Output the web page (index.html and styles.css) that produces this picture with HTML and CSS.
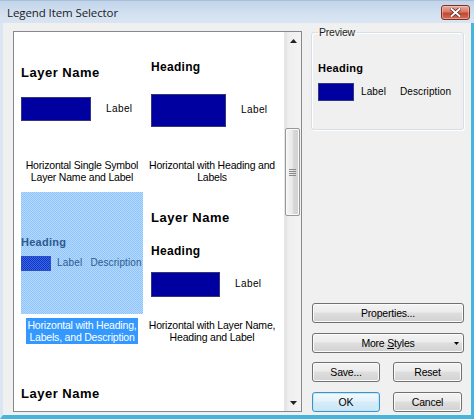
FILE: index.html
```html
<!DOCTYPE html>
<html>
<head>
<meta charset="utf-8">
<link rel="stylesheet" href="styles.css">
</head>
<body>
<div class="window">
  <div class="titlebar">
    <span class="title">Legend Item Selector</span>
    <div class="close">
      <svg width="11" height="9" viewBox="0 0 11 9"><path d="M1.5 1 L9.5 8 M9.5 1 L1.5 8" stroke="#5a1e18" stroke-width="3.4" stroke-linecap="square"/><path d="M1.5 1 L9.5 8 M9.5 1 L1.5 8" stroke="#fff" stroke-width="2" stroke-linecap="square"/></svg>
    </div>
  </div>
  <div class="client">
    <div class="listbox">
      <div class="list-content">
        <div class="grid">
          <div class="cell">
            <div class="thumb">
              <div class="ln">Layer Name</div>
              <div class="row r1"><div class="patch p1"></div><span class="lbl l1">Label</span></div>
            </div>
            <div class="caption"><span>Horizontal Single Symbol<br>Layer Name and Label</span></div>
          </div>
          <div class="cell">
            <div class="thumb">
              <div class="hd">Heading</div>
              <div class="row r2"><div class="patch p2"></div><span class="lbl l1">Label</span></div>
            </div>
            <div class="caption"><span>Horizontal with Heading and<br>Labels</span></div>
          </div>
          <div class="cell selected">
            <div class="thumb">
              <div class="hd small">Heading</div>
              <div class="row r3"><div class="patch p3"></div><span class="lbl l3">Label</span><span class="lbl l3d">Description</span></div>
            </div>
            <div class="caption"><span>Horizontal with Heading,<br>Labels, and Description</span></div>
          </div>
          <div class="cell">
            <div class="thumb">
              <div class="ln">Layer Name</div>
              <div class="hd h4">Heading</div>
              <div class="row r4"><div class="patch p4"></div><span class="lbl l4">Label</span></div>
            </div>
            <div class="caption"><span>Horizontal with Layer Name,<br>Heading and Label</span></div>
          </div>
          <div class="cell">
            <div class="thumb top">
              <div class="ln">Layer Name</div>
            </div>
          </div>
        </div>
      </div>
      <div class="vscroll">
        <div class="sb-btn">
          <svg width="7" height="4" viewBox="0 0 7 4"><path d="M0 4 L3.5 0 L7 4 Z" fill="#222"/></svg>
        </div>
        <div class="sb-track">
          <div class="sb-thumb">
            <svg width="7" height="7" viewBox="0 0 7 7"><path d="M0 0.5 H7 M0 2.5 H7 M0 4.5 H7 M0 6.5 H7" stroke="#8a8a8a" stroke-width="1"/></svg>
          </div>
        </div>
        <div class="sb-btn">
          <svg width="7" height="4" viewBox="0 0 7 4"><path d="M0 0 L3.5 4 L7 0 Z" fill="#222"/></svg>
        </div>
      </div>
    </div>
    <div class="side">
      <fieldset class="preview">
        <legend>Preview</legend>
        <div class="preview-body">
          <div class="hd small">Heading</div>
          <div class="row rp"><div class="patch pp"></div><span class="lbl lp">Label</span><span class="lbl lpd">Description</span></div>
        </div>
      </fieldset>
      <div class="buttons">
        <div class="btn">Properties...</div>
        <div class="btn dropdown"><span>More <u>S</u>tyles</span>
          <svg class="dd-arrow" width="5" height="3" viewBox="0 0 5 3"><path d="M0 0 H5 L2.5 3 Z" fill="#000"/></svg>
        </div>
        <div class="pair gap9">
          <div class="btn">Save...</div>
          <div class="btn">Reset</div>
        </div>
        <div class="pair gap10">
          <div class="btn default">OK</div>
          <div class="btn">Cancel</div>
        </div>
      </div>
    </div>
  </div>
</div>
</body>
</html>
```
FILE: styles.css
```css
body {
  margin: 0;
}

.window {
  width: 474px;
  height: 419px;
  display: flex;
  flex-direction: column;
  background: #f0f0f0;
  font-family: "Liberation Sans", Arial, sans-serif;
  overflow: hidden;
}

.titlebar {
  height: 23px;
  flex: none;
  box-sizing: border-box;
  display: flex;
  align-items: center;
  justify-content: space-between;
  padding: 0 4px 0 7px;
  background: linear-gradient(#c1d4ea, #d3e1f1 60%, #d9e5f2);
  border-top: 1px solid #a9bfd8;
}

.title {
  font-family: "Open Sans", sans-serif;
  font-size: 11.5px;
  color: #1b1b1b;
  letter-spacing: -0.1px;
}

.close {
  width: 29px;
  height: 15px;
  box-sizing: border-box;
  border: 1px solid #7c3127;
  border-radius: 3px;
  background: linear-gradient(#e8a99c, #d77a68 45%, #c4462f 55%, #d2705a);
  display: flex;
  align-items: center;
  justify-content: center;
  box-shadow: inset 0 0 0 1px rgba(255, 220, 210, 0.45);
}

.client {
  flex: 1;
  min-height: 0;
  display: flex;
  gap: 10px;
  padding: 8px 7px 3px 10px;
  border-left: 3px solid #dbe6f2;
  border-right: 3px solid #46b4dc;
  border-bottom: 4px solid #46b4dc;
}

.listbox {
  width: 289px;
  flex: none;
  box-sizing: border-box;
  border: 1px solid #86888d;
  background: #fff;
  display: flex;
}

.list-content {
  flex: 1;
  overflow: hidden;
  padding-left: 3px;
}

.grid {
  display: grid;
  grid-template-columns: 130px 130px;
  grid-auto-rows: 160px;
}

.cell {
  display: flex;
  flex-direction: column;
  align-items: center;
}

.thumb {
  width: 122px;
  height: 122px;
  flex: none;
  display: flex;
  flex-direction: column;
  justify-content: center;
  color: #000;
}

.thumb.top {
  justify-content: flex-start;
  padding-top: 34px;
  box-sizing: border-box;
}

.cell.selected .thumb {
  background: repeating-conic-gradient(#8fc3fb 0 25%, #b6d9fe 0 50%) 0 0 / 2px 2px;
  color: #2d5a8c;
}

.caption {
  margin-top: 4px;
  font-size: 10.5px;
  line-height: 12px;
  letter-spacing: -0.2px;
  text-align: center;
  white-space: nowrap;
  color: #000;
}

.caption span {
  display: inline-block;
  padding: 1px 1px;
}

.cell.selected .caption span {
  background: #3399ff;
  color: #fff;
}

.ln {
  font-size: 13px;
  font-weight: bold;
  line-height: 15px;
  letter-spacing: 0.5px;
}

.hd {
  font-size: 12px;
  font-weight: bold;
  line-height: 14px;
  letter-spacing: 0.3px;
}

.hd.small {
  font-size: 11px;
  line-height: 13px;
  letter-spacing: 0.25px;
}

.row {
  display: flex;
  align-items: center;
}

.patch {
  flex: none;
  box-sizing: border-box;
  background: #0000a0;
  border: 1px solid #35357e;
}

.lbl {
  font-size: 10px;
  letter-spacing: 0.4px;
  line-height: 12px;
}

.r1 { margin-top: 17px; }
.p1 { width: 70px; height: 24px; }
.l1 { margin-left: 15px; }

.r2 { margin-top: 20px; }
.p2 { width: 75px; height: 33px; }

.r3 { margin-top: 7px; }
.p3 {
  width: 30px;
  height: 15px;
  border-color: #2d4fc8;
  background: repeating-conic-gradient(#0d34c6 0 25%, #3c68e4 0 50%) 0 0 / 2px 2px;
}
.l3 { margin-left: 6px; letter-spacing: 0.2px; }
.l3d { margin-left: 8px; letter-spacing: 0.1px; }

.h4 { margin-top: 19px; }
.r4 { margin-top: 14px; }
.p4 { width: 69px; height: 25px; }
.l4 { margin-left: 15px; }

.vscroll {
  width: 17px;
  flex: none;
  box-sizing: border-box;
  display: flex;
  flex-direction: column;
  background: linear-gradient(90deg, #e3e3e3, #efefef 25%, #f3f3f3);
  border-left: 1px solid #e6e6e6;
}

.sb-btn {
  height: 17px;
  flex: none;
  display: flex;
  align-items: center;
  justify-content: center;
}

.sb-track {
  flex: 1;
  padding: 0 1px 0 0;
}

.sb-thumb {
  margin-top: 79px;
  height: 88px;
  box-sizing: border-box;
  border: 1px solid #989898;
  border-radius: 2px;
  background: linear-gradient(90deg, #f5f5f5, #e8e8e8 50%, #d9d9d9 51%, #d2d2d2);
  box-shadow: inset 0 0 0 1px #fafafa;
  display: flex;
  align-items: center;
  justify-content: center;
}

.side {
  flex: 1;
  display: flex;
  flex-direction: column;
}

.preview {
  margin: -4px 0 0 -1px;
  padding: 0 0 0 6px;
  border: 1px solid #d5dfe5;
  border-radius: 3px;
  box-shadow: inset 1px 1px 0 #fff, 1px 1px 0 #fff;
  min-width: 0;
}

.preview legend {
  font-size: 10.5px;
  line-height: 10px;
  letter-spacing: -0.2px;
  padding: 0 2px 0 1px;
  color: #1e1e1e;
}

.preview-body {
  height: 89px;
  padding-bottom: 3px;
  display: flex;
  flex-direction: column;
  justify-content: center;
}

.rp { margin-top: 8px; }
.pp { width: 36px; height: 18px; }
.lp { margin-left: 7px; letter-spacing: 0.1px; }
.lpd { margin-left: 14px; letter-spacing: 0.1px; }

.buttons {
  margin-top: auto;
  display: flex;
  flex-direction: column;
}

.btn {
  height: 20px;
  box-sizing: border-box;
  border: 1px solid #707070;
  border-radius: 3px;
  background: linear-gradient(#f3f3f3, #ececec 45%, #dedede 50%, #d2d2d2);
  box-shadow: inset 0 0 0 1px #fbfbfb;
  font-size: 10.5px;
  letter-spacing: -0.2px;
  color: #000;
  display: flex;
  align-items: center;
  justify-content: center;
}

.dropdown {
  position: relative;
  margin-top: 10px;
}

.dd-arrow {
  position: absolute;
  right: 4px;
  top: 8px;
}

.pair {
  display: grid;
  grid-template-columns: 68px 69px;
  column-gap: 13px;
}

.pair.gap9 { margin-top: 9px; }
.pair.gap10 { margin-top: 10px; }

.btn.default {
  border-color: #3c93c8;
  background: linear-gradient(#f3fafe, #e4f2fa 45%, #d6ecf8 50%, #cbe6f6);
  box-shadow: inset 0 0 0 1px #c3e6f9;
}
```
